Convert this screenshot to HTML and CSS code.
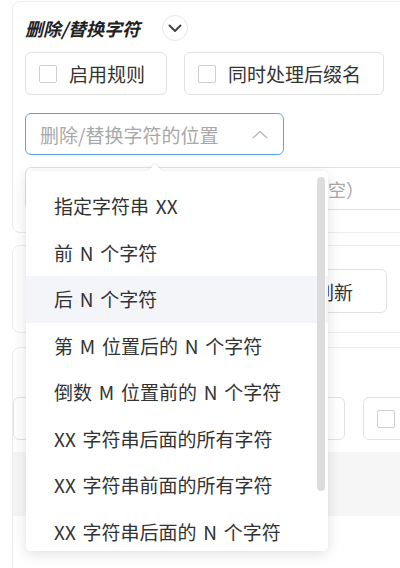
FILE: index.html
```html
<!DOCTYPE html>
<html lang="zh">
<head>
<meta charset="utf-8">
<link rel="stylesheet" href="styles.css">
</head>
<body>
<div class="page">
  <section class="card card-1">
    <div class="title-row">
      <h2 class="title">删除/替换字符</h2>
      <span class="toggle">
        <svg width="14" height="9" viewBox="0 0 14 9"><path d="M1.5 1.5 L7 7 L12.5 1.5" fill="none" stroke="#444" stroke-width="2" stroke-linecap="round" stroke-linejoin="round"/></svg>
      </span>
    </div>
    <div class="check-row">
      <label class="check-btn"><span class="box"></span>启用规则</label>
      <label class="check-btn wide"><span class="box"></span>同时处理后缀名</label>
    </div>
    <div class="select">
      <span class="placeholder">删除/替换字符的位置</span>
      <svg class="caret" width="16" height="9" viewBox="0 0 16 9"><path d="M1.5 7.5 L8 1.5 L14.5 7.5" fill="none" stroke="#bbb" stroke-width="1.6" stroke-linecap="round" stroke-linejoin="round"/></svg>
    </div>
    <div class="input"><span class="input-text">空）</span></div>
  </section>

  <section class="card card-2">
    <div class="btn-row">
      <button class="btn">刷新</button>
    </div>
  </section>

  <section class="card card-3">
    <div class="check-row row-3">
      <span class="check-btn c3a"></span>
      <span class="check-btn c3b"><span class="box"></span></span>
    </div>
    <div class="gray-area"></div>
  </section>

  <div class="dropdown">
    <span class="arrow"></span>
    <ul class="menu">
      <li>指定字符串 XX</li>
      <li>前 N 个字符</li>
      <li class="hover">后 N 个字符</li>
      <li>第 M 位置后的 N 个字符</li>
      <li>倒数 M 位置前的 N 个字符</li>
      <li>XX 字符串后面的所有字符</li>
      <li>XX 字符串前面的所有字符</li>
      <li>XX 字符串后面的 N 个字符</li>
    </ul>
    <span class="scrollbar"></span>
  </div>
</div>
</body>
</html>
```

FILE: styles.css
```css
* { box-sizing: border-box; }
html, body {
  margin: 0;
  padding: 0;
  background: #fff;
  overflow: hidden;
  width: 400px;
  height: 568px;
}
body {
  font-family: "Noto Sans CJK SC", "Noto Sans", sans-serif;
  color: #333;
}
.page {
  position: relative;
  width: 400px;
  height: 568px;
  overflow: hidden;
  padding: 1px 0 0 12px;
  display: flex;
  flex-direction: column;
  gap: 12px;
}
.card {
  border: 1px solid #ececec;
  border-radius: 8px;
  padding: 0 12px;
  background: #fff;
  width: 440px;
  flex: none;
}
.card-1 { height: 232px; }
.card-2 { height: 88px; }
.card-3 { height: 260px; margin-top: 2px; }

.title-row {
  display: flex;
  align-items: center;
  height: 50px;
  padding-top: 2px;
  gap: 22px;
}
.title {
  margin: 0;
  font-size: 18px;
  font-weight: 700;
  font-style: italic;
  color: #222;
  letter-spacing: 0;
}
.toggle {
  width: 26px;
  height: 26px;
  border: 1px solid #e6e6e6;
  border-radius: 50%;
  display: flex;
  align-items: center;
  justify-content: center;
  padding-top: 1px;
}

.check-row {
  display: flex;
  gap: 17px;
}
.check-btn {
  height: 43px;
  border: 1px solid #e2e2e2;
  border-radius: 6px;
  display: flex;
  align-items: center;
  padding-left: 13px;
  font-size: 19px;
  color: #333;
  width: 142px;
  flex: none;
}
.check-btn.wide { width: 200px; }
.box {
  width: 18px;
  height: 18px;
  border: 1px solid #cfcfcf;
  border-radius: 2px;
  margin-right: 12px;
  flex: none;
}

.select {
  margin-top: 18px;
  width: 259px;
  height: 42px;
  border: 1px solid #5aa6e3;
  border-radius: 6px;
  display: flex;
  align-items: center;
  justify-content: space-between;
  padding: 0 15px 0 14px;
}
.placeholder {
  font-size: 19px;
  letter-spacing: 0;
  color: #a8a8a8;
}
.input {
  margin-top: 12px;
  height: 43px;
  border: 1px solid #e2e2e2;
  border-radius: 6px;
  display: flex;
  align-items: center;
  padding-left: 302px;
}
.input-text {
  font-size: 18px;
  color: #a8a8a8;
}

.btn-row {
  display: flex;
  justify-content: flex-end;
  padding-top: 23px;
  width: 362px;
}
.btn {
  width: 106px;
  height: 44px;
  border: 1px solid #e0e0e0;
  border-radius: 6px;
  background: #fff;
  font-family: inherit;
  font-size: 19px;
  color: #333;
  padding: 0;
}

.row-3 {
  padding-top: 49px;
  gap: 18px;
}
.c3a { width: 332px; margin-left: -12px; }
.c3b { width: 100px; }
.gray-area {
  margin: 12px -12px 0;
  height: 64px;
  background: #f6f6f6;
}

.dropdown {
  position: absolute;
  left: 26px;
  top: 171px;
  width: 302px;
  height: 380px;
  background: #fff;
  border-radius: 4px;
  box-shadow: 0 3px 14px rgba(0,0,0,0.12), 0 0 1px rgba(0,0,0,0.08);
}
.arrow {
  position: absolute;
  left: 124px;
  top: -5px;
  width: 10px;
  height: 10px;
  background: #fff;
  transform: rotate(45deg);
  box-shadow: -1px -1px 2px rgba(0,0,0,0.06);
}
.menu {
  position: relative;
  list-style: none;
  margin: 0;
  padding: 12px 0 0;
  height: 100%;
  overflow: hidden;
  border-radius: 4px;
}
.menu li {
  height: 46.5px;
  line-height: 46.5px;
  padding-left: 28px;
  font-size: 19px;
  word-spacing: 2.5px;
  color: #333;
  white-space: nowrap;
}
.menu li.hover { background: #f4f5f9; }
.scrollbar {
  position: absolute;
  left: 291px;
  top: 6px;
  width: 8px;
  height: 314px;
  border-radius: 4px;
  background: #dcdcdc;
}
```
